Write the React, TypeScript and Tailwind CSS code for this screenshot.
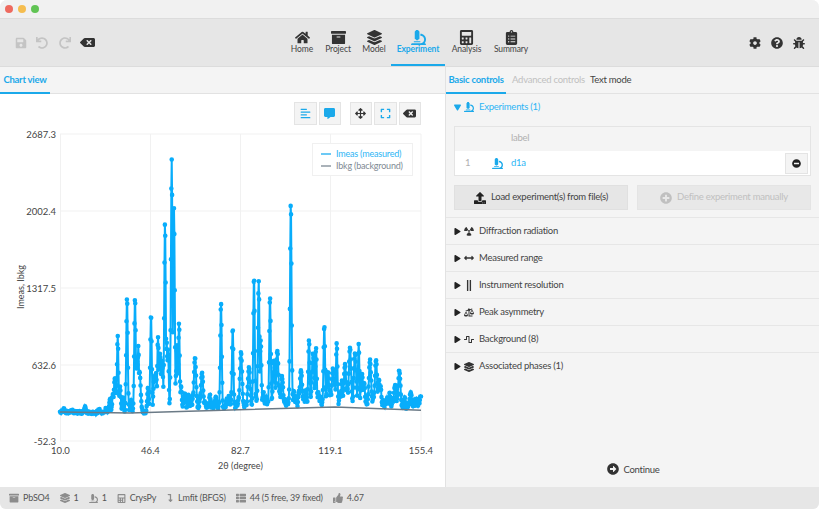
import type { ReactNode } from "react";
import {
  FaAlignLeft,
  FaArchive,
  FaArrowAltCircleRight,
  FaArrowsAlt,
  FaArrowsAltH,
  FaBackspace,
  FaBalanceScaleLeft,
  FaBug,
  FaCalculator,
  FaClipboardList,
  FaCog,
  FaCommentAlt,
  FaExpand,
  FaGripLinesVertical,
  FaHome,
  FaLayerGroup,
  FaLevelDownAlt,
  FaMicroscope,
  FaMinusCircle,
  FaPlay,
  FaPlusCircle,
  FaQuestionCircle,
  FaRadiation,
  FaRedo,
  FaSave,
  FaThList,
  FaThumbsUp,
  FaUndo,
  FaUpload,
  FaWaveSquare,
} from "react-icons/fa";

const navItems = [
  { label: "Home", icon: FaHome, width: "w-[34px]" },
  { label: "Project", icon: FaArchive, width: "w-[38px]" },
  { label: "Model", icon: FaLayerGroup, width: "w-[34px]" },
  { label: "Experiment", icon: FaMicroscope, width: "w-[54px]", active: true },
  { label: "Analysis", icon: FaCalculator, width: "w-[43px]" },
  { label: "Summary", icon: FaClipboardList, width: "w-[46px]" },
];

const sections = [
  { label: "Diffraction radiation", icon: FaRadiation, size: 10 },
  { label: "Measured range", icon: FaArrowsAltH, size: 10 },
  { label: "Instrument resolution", icon: FaGripLinesVertical, size: 11 },
  { label: "Peak asymmetry", icon: FaBalanceScaleLeft, size: 11 },
  { label: "Background (8)", icon: FaWaveSquare, size: 11 },
  { label: "Associated phases (1)", icon: FaLayerGroup, size: 10 },
];

// [x in px, top of peak in px]
const peaks = [
  [115, 377], [117.7, 337], [127, 297], [135, 297], [137, 360], [138.3, 347], [139.5, 372],
  [151, 315], [155, 375], [158, 337], [160, 355], [162, 360], [165, 223], [166.7, 343],
  [168, 350], [171.7, 159], [173, 330], [174, 208], [177, 345], [179, 323], [184.7, 393],
  [195, 358], [202, 372], [215.7, 398], [221, 302], [232.7, 328], [241, 353], [249, 367],
  [254, 278], [258.7, 280], [260.7, 340], [270, 297], [274, 360], [277.3, 350], [282, 377],
  [290.8, 203], [301, 370], [309, 339], [313, 353], [316, 347], [324.3, 326], [328, 372],
  [333, 368], [336.7, 343], [345, 365], [350, 348], [355, 353], [358.7, 345], [362, 375],
  [370, 360], [376, 360], [379, 380], [395, 385], [399.3, 370], [410.7, 392], [420.7, 396],
];

function rng(seed: number) {
  return () => {
    seed = (seed + 0x6d2b79f5) | 0;
    let t = Math.imul(seed ^ (seed >>> 15), 1 | seed);
    t = (t + Math.imul(t ^ (t >>> 7), 61 | t)) ^ t;
    return ((t ^ (t >>> 14)) >>> 0) / 4294967296;
  };
}

function baseline(x: number) {
  if (x < 130) return 412.2 + (x - 60) * 0.012;
  if (x < 335) return 413 - ((x - 130) / 205) * 6;
  return 407 + ((x - 335) / 86) * 3.2;
}

function buildChart() {
  const rand = rng(41);
  const small: number[][] = [
    [64, 3], [72, 2], [85, 5], [99, 3], [106, 4], [110, 14], [113, 20], [120, 26], [123, 16],
    [131, 12], [141, 10], [148, 25], [154, 30], [156, 40], [162, 30], [168, 25], [176, 35], [181, 25],
  ];
  for (let x = 188; x < 421; x += 2.4) {
    const amp = x > 392 ? 3 + rand() * 12 : x > 300 ? 6 + rand() * 22 : 3 + rand() * 16;
    small.push([x + rand(), amp]);
  }
  let measured = "";
  let dots = "";
  for (let x = 60; x <= 421; x += 0.38) {
    let peak = 0;
    for (const [px, top] of peaks) {
      const height = baseline(px) - top;
      const d = (x - px) / (height > 60 ? 1.05 : 1.6);
      peak = Math.max(peak, height * (Math.exp(-d * d) * 0.93 + 0.07 / (1 + d * d * 1.5)));
    }
    let floor = 0;
    for (const [px, a] of small) {
      const d = (x - px) / 1.1;
      floor = Math.max(floor, a * Math.exp(-d * d));
    }
    const y = baseline(x) - Math.max(peak, floor) - (rand() - 0.5) * 2.6;
    const p = `${x.toFixed(2)} ${y.toFixed(2)}`;
    measured += (measured ? "L" : "M") + p;
    dots += `M${p}h0`;
  }
  return { measured, dots };
}

const chart = buildChart();

const yTicks = [
  { y: 134, label: "2687.3" },
  { y: 211, label: "2002.4" },
  { y: 288, label: "1317.5" },
  { y: 365, label: "632.6" },
  { y: 441, label: "-52.3" },
];
const xTicks = [
  { x: 60.5, label: "10.0" },
  { x: 150.5, label: "46.4" },
  { x: 240.5, label: "82.7" },
  { x: 330.5, label: "119.1" },
  { x: 421, label: "155.4" },
];

function ToolButton({ children }: { children: ReactNode }) {
  return (
    <div className="flex h-[23px] w-[22.5px] items-center justify-center border border-[#e4e4e4] bg-[#f4f4f4]">
      {children}
    </div>
  );
}

function Chart() {
  return (
    <div className="relative min-h-0 flex-1 bg-white">
      <div className="flex h-[34px] justify-end gap-[2px] pr-[24px] pt-[8px]">
        <ToolButton>
          <FaAlignLeft size={11} className="text-[#1ba9ea]" />
        </ToolButton>
        <div className="mr-[6.5px]">
          <ToolButton>
            <FaCommentAlt size={11} className="text-[#1ba9ea]" />
          </ToolButton>
        </div>
        <ToolButton>
          <FaArrowsAlt size={11} className="text-[#333]" />
        </ToolButton>
        <ToolButton>
          <FaExpand size={11} className="text-[#1ba9ea]" />
        </ToolButton>
        <ToolButton>
          <FaBackspace size={13} className="text-[#333]" />
        </ToolButton>
      </div>
      <svg viewBox="0 128 445 359" width={445} height={359} className="block tracking-normal">
        {yTicks.map((t) => (
          <g key={t.label}>
            <line x1={60} x2={421} y1={t.y} y2={t.y} stroke="#f1f1f1" />
            <text x={56} y={t.y + 3.5} textAnchor="end" fontSize={9.5} fill="#444">
              {t.label}
            </text>
          </g>
        ))}
        {xTicks.map((t) => (
          <g key={t.label}>
            <line x1={t.x} x2={t.x} y1={134} y2={441} stroke="#f1f1f1" />
            <text x={t.x} y={454} textAnchor="middle" fontSize={9.5} fill="#444">
              {t.label}
            </text>
          </g>
        ))}
        <text x={240.5} y={469} textAnchor="middle" fontSize={9} fill="#444">
          2θ (degree)
        </text>
        <text transform="translate(24 287) rotate(-90)" textAnchor="middle" fontSize={9} fill="#444">
          Imeas, Ibkg
        </text>
        <path d={chart.measured} fill="none" stroke="#08adfb" strokeWidth={2} />
        <path d={chart.dots} fill="none" stroke="#08adfb" strokeWidth={4.6} strokeLinecap="round" />
        <path d="M60 412 L130 413 L335 407 L421 410.2" fill="none" stroke="#6b7a86" strokeWidth={1.5} />
      </svg>
      <div className="absolute left-[312px] top-[49px] flex h-[33px] w-[101px] flex-col justify-center gap-[2px] border border-[#f0f0f0] bg-white pl-[8px] text-[9px] leading-[10px] tracking-[-0.2px]">
        <div className="flex items-center gap-[5px] text-[#2db5f5]">
          <span className="h-[2px] w-[10px] shrink-0 bg-[#6cc9f5]" />
          Imeas (measured)
        </div>
        <div className="flex items-center gap-[5px] text-[#808a94]">
          <span className="h-[2px] w-[10px] shrink-0 bg-[#aab2b9]" />
          Ibkg (background)
        </div>
      </div>
    </div>
  );
}

function StatusItem({ icon, label }: { icon: ReactNode; label: string }) {
  return (
    <div className="flex items-center gap-[4px]">
      <span className="text-[#8c8c8c]">{icon}</span>
      <span>{label}</span>
    </div>
  );
}

export default function App() {
  return (
    <div className="flex h-[509px] w-[819px] flex-col overflow-hidden rounded-t-[7px] rounded-b-[6px] bg-[#f4f4f4] font-['Lato',sans-serif] text-[9.5px] tracking-[-0.25px] text-[#444]">
      <div className="flex h-[19px] shrink-0 items-center gap-[5px] border-b border-[#dcdcdc] bg-[#f1f1f1] pl-[5px]">
        <span className="h-[8px] w-[8px] rounded-full bg-[#ee6a5f]" />
        <span className="h-[8px] w-[8px] rounded-full bg-[#f5bd4f]" />
        <span className="h-[8px] w-[8px] rounded-full bg-[#61c454]" />
      </div>

      <div className="grid h-[48px] shrink-0 grid-cols-[1fr_auto_1fr] items-stretch border-b border-[#dcdcdc] bg-[#e6e6e6]">
        <div className="flex items-center gap-[9px] pl-[15px]">
          <FaSave size={12} className="text-[#c4c4c4]" />
          <FaUndo size={12} className="text-[#c4c4c4]" />
          <FaRedo size={12} className="ml-[2px] text-[#c4c4c4]" />
          <FaBackspace size={15} className="text-[#333]" />
        </div>
        <nav className="flex">
          {navItems.map((item) => (
            <div
              key={item.label}
              className={`flex ${item.width} flex-col items-center pt-[11px] ${
                item.active ? "border-b-2 border-[#1ba9ea] font-bold text-[#1ba9ea]" : "text-[#444]"
              }`}
            >
              <item.icon size={15} className={item.active ? "text-[#1ba9ea]" : "text-[#333]"} />
              <span className="mt-[-1px] whitespace-nowrap text-[8.5px] leading-[11px] tracking-[-0.1px]">{item.label}</span>
            </div>
          ))}
        </nav>
        <div className="flex items-center justify-end gap-[10px] pr-[14px]">
          <FaCog size={12} className="text-[#333]" />
          <FaQuestionCircle size={12} className="text-[#333]" />
          <FaBug size={12} className="text-[#333]" />
        </div>
      </div>

      <div className="flex min-h-0 flex-1">
        <div className="flex w-[445px] shrink-0 flex-col">
          <div className="flex h-[27px] shrink-0 border-b border-[#e2e2e2]">
            <div className="-mb-px flex w-[50px] items-center justify-center border-b-2 border-[#1ba9ea] pt-[1px] font-bold text-[#1ba9ea]">
              Chart view
            </div>
          </div>
          <Chart />
        </div>

        <div className="flex min-w-0 flex-1 flex-col border-l border-[#e2e2e2]">
          <div className="flex h-[27px] shrink-0 items-stretch border-b border-[#e2e2e2]">
            <div className="-mb-px flex w-[60px] items-center justify-center border-b-2 border-[#1ba9ea] pt-[1px] font-bold text-[#1ba9ea]">
              Basic controls
            </div>
            <div className="ml-[6px] flex w-[78px] items-center pt-[1px] text-[#c0c0c0]">Advanced controls</div>
            <div className="flex items-center pt-[1px] text-[#444]">Text mode</div>
          </div>

          <div className="border-b border-[#e6e6e6] px-[8px] pb-[7px]">
            <div className="flex h-[26px] items-center text-[#2db5f5]">
              <FaPlay size={7} className="rotate-90 text-[#1ba9ea]" />
              <FaMicroscope size={10} className="ml-[3px] text-[#1ba9ea]" />
              <span className="ml-[5px]">Experiments (1)</span>
            </div>
            <div className="mt-[6px] border border-[#e4e4e4]">
              <div className="flex h-[24px] items-center pb-[2px] pl-[56px] text-[#b0b0b0]">label</div>
              <div className="flex h-[24px] items-center bg-white pl-[10px]">
                <span className="w-[27px] text-[#b0b0b0]">1</span>
                <FaMicroscope size={11} className="text-[#1ba9ea]" />
                <span className="ml-[8px] text-[#2db5f5]">d1a</span>
                <div className="ml-auto mr-[2px] flex h-[21px] w-[23px] items-center justify-center border border-[#e4e4e4] bg-[#f4f4f4]">
                  <FaMinusCircle size={9} className="text-[#222]" />
                </div>
              </div>
            </div>
            <div className="mt-[9px] flex gap-[9px]">
              <div className="flex h-[25px] flex-1 items-center justify-center gap-[5px] border border-[#e0e0e0] bg-[#e6e6e6] text-[#444]">
                <FaUpload size={12} className="text-[#222]" />
                Load experiment(s) from file(s)
              </div>
              <div className="flex h-[25px] flex-1 items-center justify-center gap-[5px] border border-[#e4e4e4] bg-[#e8e8e8] text-[#c0c0c0]">
                <FaPlusCircle size={12} className="text-[#c0c0c0]" />
                Define experiment manually
              </div>
            </div>
          </div>

          {sections.map((s, i) => (
            <div
              key={s.label}
              className={`flex h-[27px] shrink-0 items-center pl-[8px] ${
                i < sections.length - 1 ? "border-b border-[#e6e6e6]" : ""
              }`}
            >
              <FaPlay size={7} className="text-[#222]" />
              <span className="ml-[3px] flex w-[10px] justify-center">
                <s.icon size={s.size} className="text-[#333]" />
              </span>
              <span className="ml-[5px]">{s.label}</span>
            </div>
          ))}

          <div className="mt-auto flex h-[24px] shrink-0 items-start justify-center gap-[4px] pl-[2px]">
            <FaArrowAltCircleRight size={12} className="text-[#333]" />
            <span>Continue</span>
          </div>
        </div>
      </div>

      <div className="flex h-[22px] shrink-0 items-center gap-[10px] bg-[#e6e6e6] pl-[9px] text-[9px] tracking-[-0.2px] text-[#555]">
        <StatusItem icon={<FaArchive size={10} />} label="PbSO4" />
        <StatusItem icon={<FaLayerGroup size={10} />} label="1" />
        <StatusItem icon={<FaMicroscope size={9} />} label="1" />
        <StatusItem icon={<FaCalculator size={9} />} label="CrysPy" />
        <StatusItem icon={<FaLevelDownAlt size={8} />} label="Lmfit (BFGS)" />
        <StatusItem icon={<FaThList size={10} />} label="44 (5 free, 39 fixed)" />
        <StatusItem icon={<FaThumbsUp size={10} />} label="4.67" />
      </div>
    </div>
  );
}
